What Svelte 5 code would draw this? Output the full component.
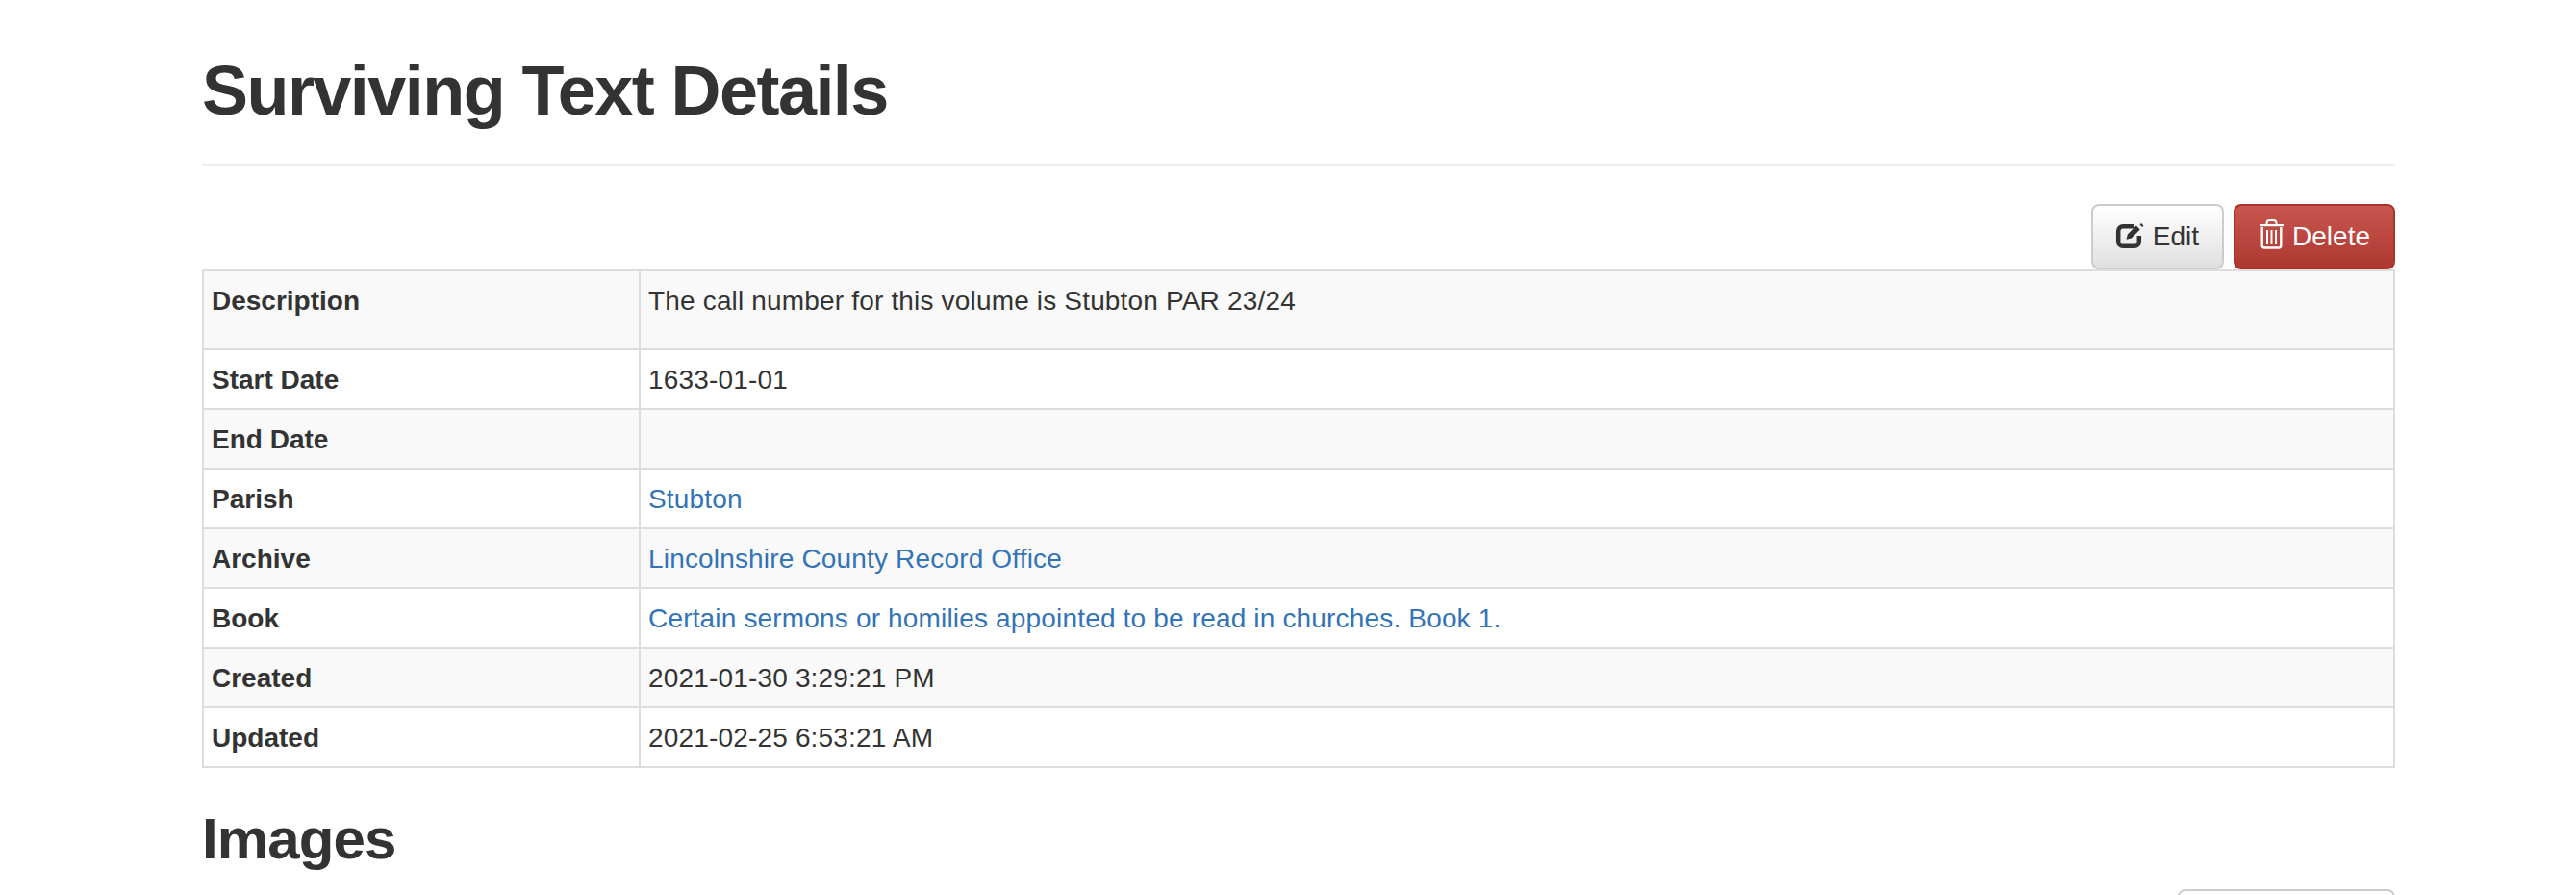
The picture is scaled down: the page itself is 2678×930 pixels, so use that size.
<script>
  const rows = [
    { label: "Description", value: "The call number for this volume is Stubton PAR 23/24", para: true },
    { label: "Start Date", value: "1633-01-01" },
    { label: "End Date", value: "" },
    { label: "Parish", value: "Stubton", link: true },
    { label: "Archive", value: "Lincolnshire County Record Office", link: true },
    { label: "Book", value: "Certain sermons or homilies appointed to be read in churches. Book 1.", link: true },
    { label: "Created", value: "2021-01-30 3:29:21 PM" },
    { label: "Updated", value: "2021-02-25 6:53:21 AM" },
  ];
</script>

<div class="container">
  <div class="page-header">
    <h1>Surviving Text Details</h1>
  </div>

  <div class="actions">
    <a class="btn btn-default" href="#edit">
      <svg class="icon" viewBox="0 0 28 28" aria-hidden="true">
        <path fill="none" stroke="currentColor" stroke-width="4.500" d="M18 3.200H7a4.800 4.800 0 0 0-4.800 4.800V19A4.800 4.800 0 0 0 7 23.800H19A4.800 4.800 0 0 0 23.800 19V13" />
        <path fill="currentColor" d="M20.800 2.500l4 4-9 9-5.300 1.300 1.300-5.300zM24.500 1.500l1.500-1.500 2.500 2.500-1.500 1.500z" />
      </svg>
      Edit
    </a>
    <a class="btn btn-danger" href="#delete">
      <svg class="icon" viewBox="0 0 28 28" aria-hidden="true">
        <path fill="currentColor" d="M1 1h25v2.200H1z" />
        <path fill="none" stroke="currentColor" stroke-width="2" d="M8.500 1.500V0a3 3 0 0 1 3-3h4a3 3 0 0 1 3 3v1.500" />
        <path fill="none" stroke="currentColor" stroke-width="2.400" d="M3.700 4V23a2.500 2.500 0 0 0 2.500 2.500H20.800A2.500 2.500 0 0 0 23.300 23V4" />
        <path fill="currentColor" d="M8 7h2v15H8zM12.500 7h2v15h-2zM17 7h2v15h-2z" />
      </svg>
      Delete
    </a>
  </div>

  <table>
    <tbody>
      {#each rows as row}
        <tr>
          <th>{row.label}</th>
          <td>
            {#if row.para}
              <p>{row.value}</p>
            {:else if row.link}
              <a href="#link">{row.value}</a>
            {:else}
              {row.value}
            {/if}
          </td>
        </tr>
      {/each}
    </tbody>
  </table>

  <h2>Images</h2>
  <div class="actions">
    <a class="btn btn-default wide" href="#add" aria-label="Add"></a>
  </div>
</div>

<style>
  :global(html), :global(body) {
    overflow: hidden;
    background: #fff;
  }

  .container {
    width: 2280px;
    margin-left: 210px;
    font-family: "Liberation Sans", Arial, sans-serif;
    font-size: 28px;
    line-height: 40px;
    color: #333;
  }

  .page-header {
    padding-top: 55px;
    padding-bottom: 18px;
    margin-bottom: 40px;
    border-bottom: 2px solid #eee;
  }

  h1 {
    margin: 0;
    padding-bottom: 18px;
    font-size: 72px;
    line-height: 79px;
    font-weight: 700;
    letter-spacing: -1.55px;
  }

  h2 {
    margin: 41px 0 19px;
    font-size: 60px;
    line-height: 66px;
    font-weight: 700;
    letter-spacing: -0.9px;
  }

  .actions {
    display: flex;
    justify-content: flex-end;
    gap: 10px;
  }

  .btn {
    display: inline-flex;
    align-items: center;
    gap: 7px;
    height: 68px;
    box-sizing: border-box;
    padding: 12px 24px;
    border: 2px solid transparent;
    border-radius: 8px;
    text-decoration: none;
  }

  .btn-default {
    gap: 10px;
    color: #333;
    background: linear-gradient(#fff, #e0e0e0);
    border-color: #ccc;
  }

  .btn-danger {
    color: #fff;
    background: linear-gradient(#c8564f, #ad3830);
    border-color: #ab3329;
  }

  .wide {
    width: 226px;
  }

  .icon {
    width: 28px;
    height: 28px;
    flex: none;
    overflow: visible;
  }

  table {
    width: 100%;
    border-collapse: collapse;
    border: 2px solid #ddd;
  }

  tr:nth-child(odd) {
    background: #f9f9f9;
  }

  th,
  td {
    padding: 11px 10px 9px 8px;
    border: 2px solid #ddd;
    text-align: left;
    vertical-align: top;
  }

  th {
    width: 434px;
    font-weight: 700;
  }

  td {
    letter-spacing: 0.17px;
  }

  p {
    margin: 0 0 20px;
  }

  td a {
    color: #3373b7;
    text-decoration: none;
  }
</style>
